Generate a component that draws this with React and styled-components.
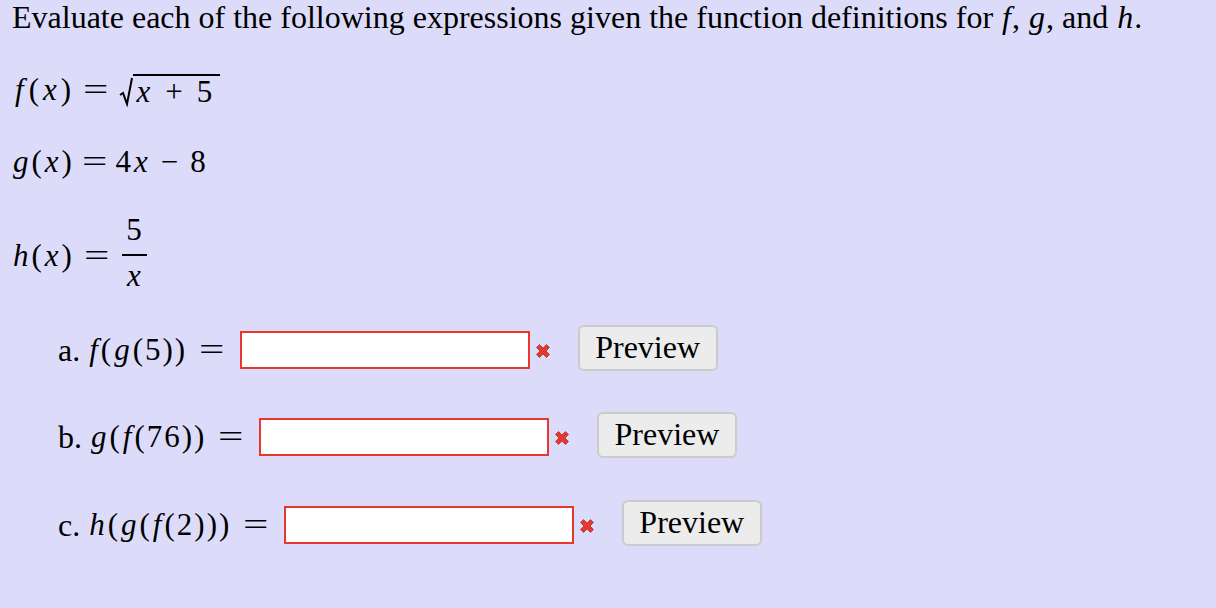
import React from "react";
import styled, { createGlobalStyle } from "styled-components";

const Global = createGlobalStyle`
  html, body {
    margin: 0;
    padding: 0;
    background: #dcdcfa;
  }
  body {
    font-family: "Liberation Serif", "Times New Roman", serif;
    font-size: 32px;
    color: #000;
  }
`;

const Page = styled.div`
  width: 1216px;
  height: 608px;
  padding: 0 12px;
  box-sizing: border-box;
  display: flex;
  flex-direction: column;
  background: #dcdcfa;
`;

const Heading = styled.p`
  margin: 0;
  line-height: 34px;
  white-space: nowrap;
`;

const Row = styled.div`
  display: flex;
  align-items: center;
  height: ${(p) => p.h || 40}px;
  margin-top: ${(p) => p.top || 0}px;
  padding-left: ${(p) => p.indent || 0}px;
`;

const Formula = styled.span`
  display: inline-flex;
  align-items: center;
  font-family: "Liberation Serif", "Times New Roman", serif;
  font-size: 31px;
  letter-spacing: 2px;
  white-space: nowrap;
`;

const V = styled.i`
  font-family: "Liberation Serif", "Times New Roman", serif;
  font-style: italic;
  margin: 0 ${(p) => p.m ?? 1}px;
`;

const Op = styled.span`
  margin: 0 ${(p) => p.gap ?? 12}px;
`;

const Eq = styled.span`
  display: inline-block;
  transform: scaleX(1.45);
  margin: 0 ${(p) => p.gap ?? 14}px;
  letter-spacing: 0;
`;

const Sqrt = styled.span`
  display: inline-flex;
  align-items: flex-end;
`;

const Radicand = styled.span`
  border-top: 2px solid #000;
  padding: 1px 6px 0 3px;
  line-height: 30px;
`;

const Frac = styled.span`
  display: inline-flex;
  flex-direction: column;
  align-items: center;
  font-size: 31px;
  line-height: 30px;
  margin: 0 0 6px 3px;
`;

const FracBar = styled.span`
  width: 25px;
  height: 2px;
  background: #000;
  margin: 9px 0 5px;
`;

const Label = styled.span`
  margin-right: 8px;
`;

const Answer = styled.input`
  width: 290px;
  height: 38px;
  box-sizing: border-box;
  border: 2px solid #e7382d;
  background: #fff;
  margin-left: 3px;
  padding: 0 4px;
  font-size: 18px;
  outline: none;
`;

const Mark = styled.svg`
  width: 16px;
  height: 16px;
  margin-left: 5px;
  margin-top: 2px;
`;

const PreviewButton = styled.button`
  margin: 0 0 5px 27px;
  width: 140px;
  height: 46px;
  border: 2px solid #cbcbcb;
  border-radius: 6px;
  background: #ececec;
  font-family: "Liberation Serif", "Times New Roman", serif;
  font-size: 32px;
  color: #000;
  padding: 0;
`;

const Cross = () => (
  <Mark viewBox="0 0 16 16">
    <path
      d="M1.5 4.5 4.5 1.5 8 5 11.5 1.5 14.5 4.5 11 8 14.5 11.5 11.5 14.5 8 11 4.5 14.5 1.5 11.5 5 8Z"
      fill="#e8382c"
      stroke="#9a2e27"
      strokeWidth="0.7"
      strokeLinejoin="round"
    />
  </Mark>
);

const AnswerRow = ({ label, top, children }) => (
  <Row indent={46} top={top} h={48}>
    <Label>{label}</Label>
    <Formula>
      {children}
      <Eq gap={16}>=</Eq>
    </Formula>
    <Answer type="text" />
    <Cross />
    <PreviewButton>Preview</PreviewButton>
  </Row>
);

export default function App() {
  return (
    <Page>
      <Global />
      <Heading>
        Evaluate each of the following expressions given the function
        definitions for <V>f</V>, <V>g</V>, and <V>h</V>.
      </Heading>

      <Row top={36} h={40}>
        <Formula>
          <V m={3}>f</V>(<V m={2}>x</V>)<Eq>=</Eq>
          <Sqrt>
            <svg width="14" height="30" viewBox="0 0 14 30">
              <path d="M1 18 L4 16 L8 27 L13 1" fill="none" stroke="#000" strokeWidth="2" />
            </svg>
            <Radicand>
              <V>x</V>
              <Op gap={12}>+</Op>5
            </Radicand>
          </Sqrt>
        </Formula>
      </Row>

      <Row top={32} h={40}>
        <Formula>
          <V>g</V>(<V>x</V>)<Eq gap={12}>=</Eq>4<V>x</V>
          <Op gap={10}>−</Op>8
        </Formula>
      </Row>

      <Row top={34} h={80}>
        <Formula>
          <V>h</V>(<V>x</V>)<Eq>=</Eq>
          <Frac>
            <span>5</span>
            <FracBar />
            <V>x</V>
          </Frac>
        </Formula>
      </Row>

      <AnswerRow label="a." top={30}>
        <V>f</V>(<V>g</V>(5))
      </AnswerRow>
      <AnswerRow label="b." top={39}>
        <V>g</V>(<V>f</V>(76))
      </AnswerRow>
      <AnswerRow label="c." top={40}>
        <V>h</V>(<V>g</V>(<V>f</V>(2)))
      </AnswerRow>
    </Page>
  );
}
